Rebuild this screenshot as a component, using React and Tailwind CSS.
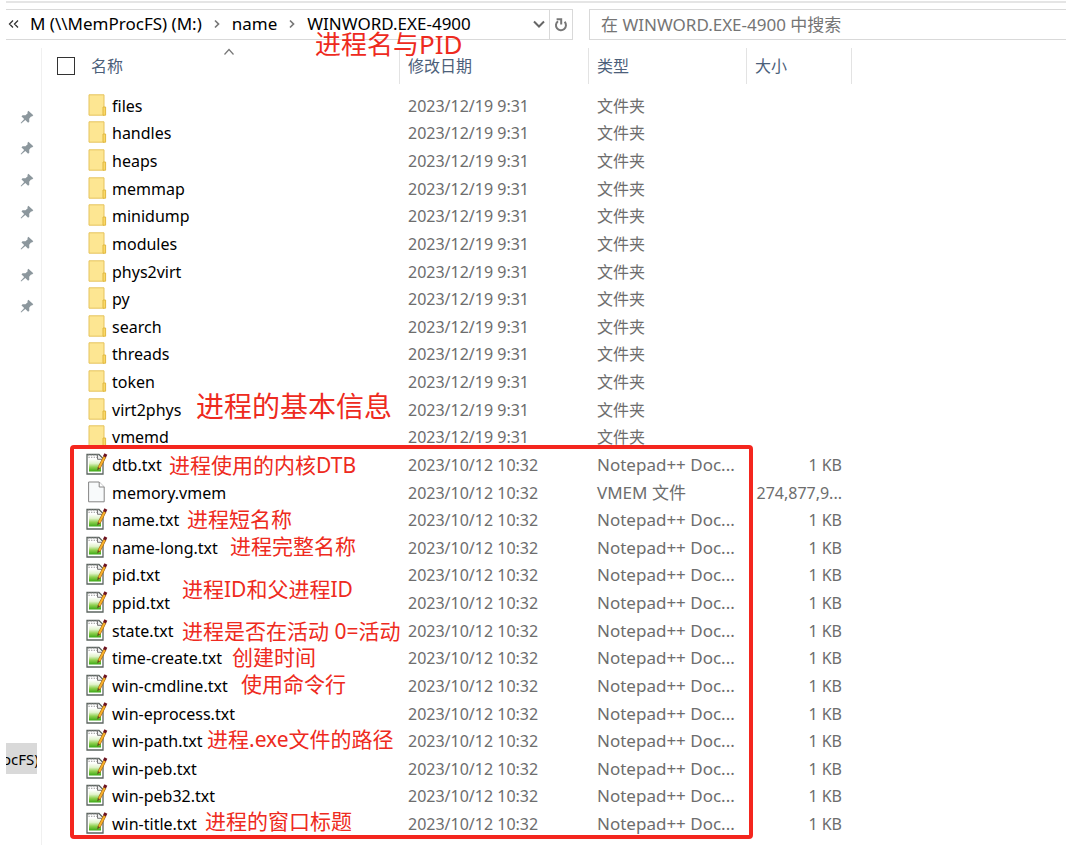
import React from "react";

const folders = [
    "files", "handles", "heaps", "memmap", "minidump", "modules", "phys2virt",
    "py", "search", "threads", "token", "virt2phys", "vmemd"
];

const files = [
    "dtb.txt", "memory.vmem", "name.txt", "name-long.txt", "pid.txt", "ppid.txt",
    "state.txt", "time-create.txt", "win-cmdline.txt", "win-eprocess.txt",
    "win-path.txt", "win-peb.txt", "win-peb32.txt", "win-title.txt"
];

const rows = [
    ...folders.map((name) => ({ name, icon: "folder", date: "2023/12/19 9:31", type: "文件夹", size: "" })),
    ...files.map((name) =>
        name.endsWith(".txt")
            ? { name, icon: "text", date: "2023/10/12 10:32", type: "Notepad++ Doc...", size: "1 KB" }
            : { name, icon: "blank", date: "2023/10/12 10:32", type: "VMEM 文件", size: "274,877,9..." }
    )
];

// red marks on top of the list, placed from the list's top left corner
const notes = [
    { text: "进程名与PID", place: "left-[273px] -top-[24px] text-[26px]" },
    { text: "进程的基本信息", place: "left-[154px] top-[338px] text-[28px]" },
    { text: "进程使用的内核DTB", place: "left-[127px] top-[397px] text-[21px]" },
    { text: "进程短名称", place: "left-[145px] top-[451px] text-[21px]" },
    { text: "进程完整名称", place: "left-[188px] top-[478px] text-[21px]" },
    { text: "进程ID和父进程ID", place: "left-[140px] top-[521px] text-[21px]" },
    { text: "进程是否在活动 0=活动", place: "left-[140px] top-[563px] text-[21px]" },
    { text: "创建时间", place: "left-[190px] top-[589px] text-[21px]" },
    { text: "使用命令行", place: "left-[199px] top-[616px] text-[21px]" },
    { text: "进程.exe文件的路径", place: "left-[165px] top-[671px] text-[21px]" },
    { text: "进程的窗口标题", place: "left-[163px] top-[753px] text-[21px]" }
];

function FolderIcon() {
    return (
        <svg width="22" height="22" viewBox="0 0 22 22">
            <path d="M3 .8h15v20.4H3z" fill="#fde692" stroke="#e6c35c" />
            <path d="M17 13h2.6v8.2H17z" fill="#fbd968" stroke="#e0b840" />
        </svg>
    );
}

function BlankIcon() {
    return (
        <svg width="22" height="22" viewBox="0 0 22 22">
            <path d="M2.6 1h10.6l5 5v14.8H2.6z" fill="#f8fafb" stroke="#858585" />
            <path d="M13.2 1v5h5" fill="#fff" stroke="#858585" />
        </svg>
    );
}

function TextIcon() {
    return (
        <svg width="22" height="22" viewBox="0 0 22 22">
            <defs>
                <linearGradient id="page" x1="0" y1="0" x2="0" y2="1">
                    <stop offset="0" stopColor="#fff" />
                    <stop offset="0.35" stopColor="#e2f3cc" />
                    <stop offset="0.65" stopColor="#8fd04f" />
                    <stop offset="1" stopColor="#3aa815" />
                </linearGradient>
            </defs>
            <path d="M1 1.5h12l4 4V21H1z" fill="#fff" stroke="#5c6560" strokeWidth="1.3" />
            <path d="M3 6h12v12.5H3z" fill="url(#page)" />
            <path d="M2 2h11M2.5 4.2h9" stroke="#888" strokeWidth="1.1" strokeDasharray="1.2 1.4" />
            <path d="M11.5 1.5v4.8h5" fill="#eee" stroke="#777" />
            <path d="M18.9 3.5 13 15" stroke="#9a5b10" strokeWidth="3" />
            <path d="M18.9 3.5 13 15" stroke="#f8b12b" strokeWidth="2" />
            <path d="m11.8 14-.6 3.6 2.9-2.4z" fill="#6a4818" />
            <path d="m18.5 3.7 1.4-2.7" stroke="#6d1420" strokeWidth="3.2" />
        </svg>
    );
}

const icons = { folder: FolderIcon, blank: BlankIcon, text: TextIcon };

function Pin() {
    return (
        <svg width="14" height="14" viewBox="0 0 14 14" fill="#8c979d">
            <path d="M8.4.8 13.3 5.2 12 6.6l-1-.2-1.8 2.3.1 3-1.2 1-2.8-2.6-4.1 3.5-.6-.5 3.6-4-2.7-2.7 1-1.2 3 .1 2.2-2L7.4 2z" />
        </svg>
    );
}

function Crumb({ children }) {
    return <a href="#" className="whitespace-nowrap">{children}</a>;
}

function Chevron() {
    return (
        <svg width="8" height="10" viewBox="0 0 8 10" fill="none" stroke="#777" strokeWidth="1.7">
            <path d="m2 1.5 3.5 3.5L2 8.5" />
        </svg>
    );
}

function AddressBar() {
    return (
        <div className="ml-1.5 mt-px flex gap-4 border-t-2 border-[#e5e5e5] pt-1.5 text-[17px]">
            <nav className="flex h-[31px] w-[567px] shrink-0 border border-l-0 border-[#d9d9d9]">
                <div className="flex flex-1 items-center pb-0.5">
                    <svg className="ml-0.5" width="11" height="10" viewBox="0 0 11 10" fill="none" stroke="#333" strokeWidth="1.3">
                        <path d="M5 1.5 1.5 5 5 8.5M10 1.5 6.5 5 10 8.5" />
                    </svg>
                    <div className="ml-[11px] flex items-center gap-[11px]">
                        <Crumb>M (\\MemProcFS) (M:)</Crumb>
                        <Chevron />
                        <Crumb>name</Crumb>
                        <Chevron />
                        <Crumb>WINWORD.EXE-4900</Crumb>
                    </div>
                    <button aria-label="History" className="ml-auto mr-1">
                        <svg width="12" height="10" viewBox="0 0 12 10" fill="none" stroke="#666" strokeWidth="2">
                            <path d="m1 2.5 5 5 5-5" />
                        </svg>
                    </button>
                </div>
                <button aria-label="Refresh" className="flex w-[23px] items-center justify-center border-l border-[#d9d9d9]">
                    <svg width="14" height="16" viewBox="0 0 14 16" fill="none" stroke="#777" strokeWidth="2">
                        <path d="M4 4.2a5 5 0 1 0 6.6.6" />
                        <path d="M2.6 2.2h4.6v5.2" />
                    </svg>
                </button>
            </nav>
            <input
                aria-label="Search"
                placeholder="在 WINWORD.EXE-4900 中搜索"
                className="h-[31px] min-w-0 flex-1 border border-r-0 border-[#d9d9d9] px-[11px] outline-none placeholder:text-[#757575]"
            />
        </div>
    );
}

function Sidebar() {
    return (
        <aside className="flex w-[42px] shrink-0 flex-col border-r border-[#f0f0f0] pl-1.5 pt-[53px]">
            <div className="flex h-[221px] flex-col">
                {[1, 2, 3, 4, 5, 6, 7].map((n) => (
                    <button key={n} aria-label="Pinned folder" className="flex flex-1 items-center pl-3.5">
                        <Pin />
                    </button>
                ))}
            </div>
            <a href="#" className="mb-[72px] mt-auto flex h-[31px] w-[31px] items-center overflow-hidden bg-[#d9d9d9]">
                <span className="-ml-1 text-[15px]">ocFS)</span>
            </a>
        </aside>
    );
}

function Heading({ children }) {
    return (
        <th scope="col" className="h-11 p-0 text-left align-top font-normal text-[#4c607a]">
            <div className="flex h-9 items-center border-r border-[#e3e3e3] pl-2">{children}</div>
        </th>
    );
}

function FileList() {
    return (
        <main className="relative min-w-0 flex-1 pb-2">
            <table className="h-[790px] w-full table-fixed border-collapse text-[#6d6d6d]">
                <colgroup>
                    <col className="w-[358px]" />
                    <col className="w-[189px]" />
                    <col className="w-[158px]" />
                    <col className="w-[105px]" />
                    <col />
                </colgroup>
                <thead>
                    <tr>
                        <Heading>
                            <input
                                type="checkbox"
                                aria-label="Select all"
                                className="ml-[7px] mr-4 size-[18px] appearance-none border border-[#333]"
                            />
                            名称
                            <svg className="ml-[100px] self-start" width="12" height="8" viewBox="0 0 12 8" fill="none" stroke="#777" strokeWidth="1.2">
                                <path d="m1.5 6.5 4.5-5 4.5 5" />
                            </svg>
                        </Heading>
                        <Heading>修改日期</Heading>
                        <Heading>类型</Heading>
                        <Heading>大小</Heading>
                        <td></td>
                    </tr>
                </thead>
                <tbody>
                    {rows.map((r) => {
                        const Icon = icons[r.icon];
                        return (
                            <tr key={r.name}>
                                <td className="p-0 pl-11">
                                    <div className="flex items-start gap-1 text-black">
                                        <Icon />
                                        {r.name}
                                    </div>
                                </td>
                                <td className="p-0 pl-2">{r.date}</td>
                                <td className={r.icon === "folder" ? "p-0 pl-2" : "whitespace-nowrap p-0 pl-2 text-[17px]"}>{r.type}</td>
                                <td className="p-0 pr-2.5 text-right">{r.size}</td>
                                <td></td>
                            </tr>
                        );
                    })}
                </tbody>
            </table>

            <div className="pointer-events-none absolute left-7 top-[397px] h-[394px] w-[683px] rounded-sm border-4 border-[#f4261e]"></div>
            {notes.map((n) => (
                <span key={n.text} className={`pointer-events-none absolute whitespace-nowrap leading-10 text-[#ee2a20] ${n.place}`}>
                    {n.text}
                </span>
            ))}
        </main>
    );
}

export default function App() {
    return (
        <div className="flex flex-col overflow-hidden bg-white font-['Noto_Sans','Noto_Sans_CJK_SC',sans-serif] text-base leading-6 text-black">
            <AddressBar />
            <div className="mt-2 flex">
                <Sidebar />
                <FileList />
            </div>
        </div>
    );
}
